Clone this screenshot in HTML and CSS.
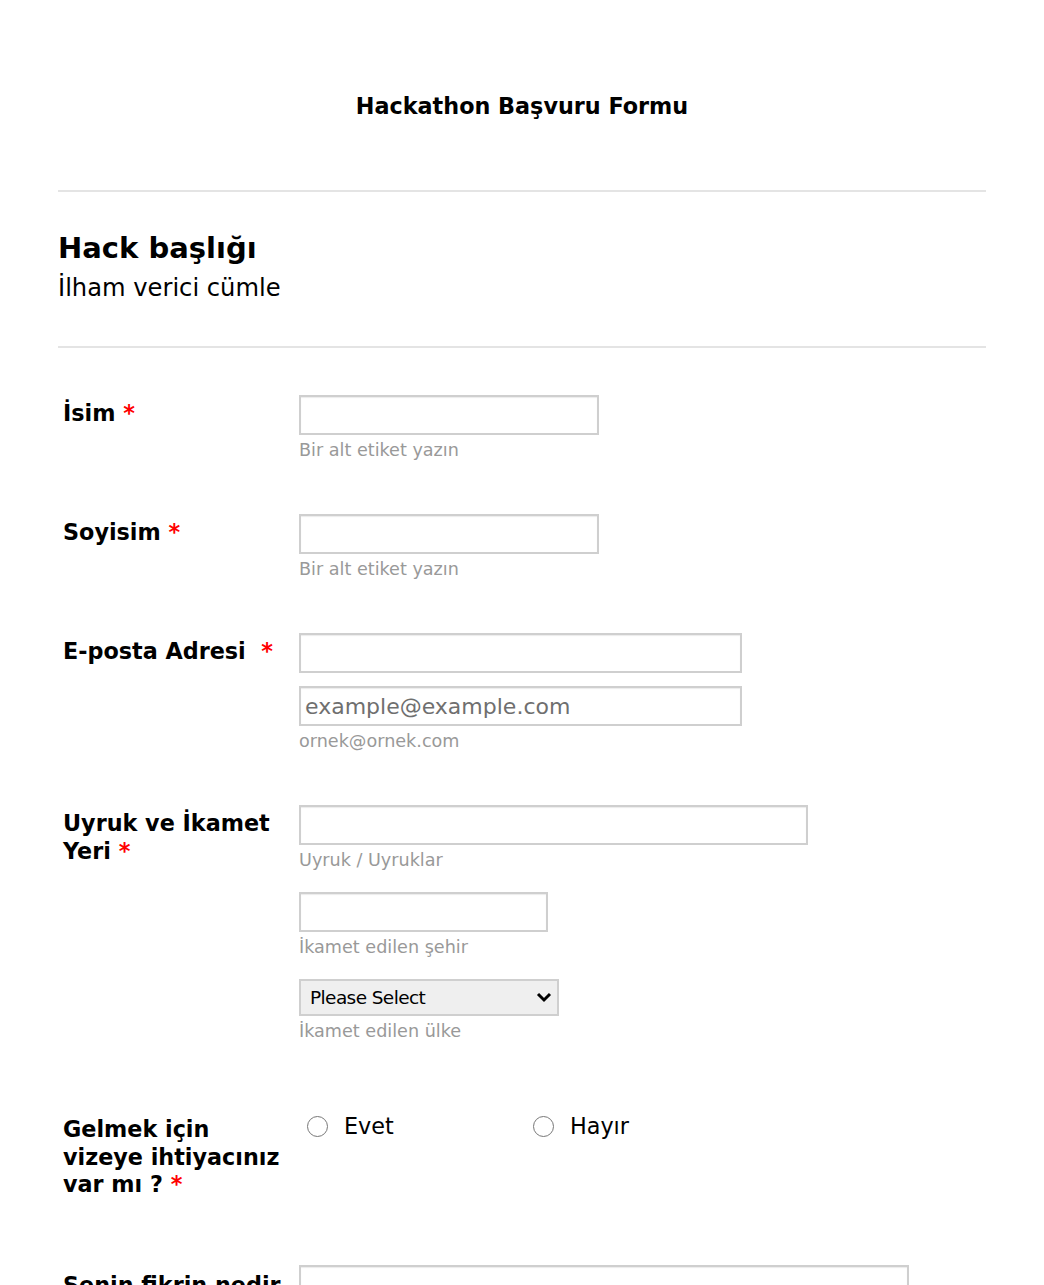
FILE: index.html
```html
<!DOCTYPE html>
<html lang="tr">
<head>
<meta charset="UTF-8" />
<title>Hackathon Başvuru Formu</title>
<link rel="stylesheet" href="styles.css">
</head>
<body>
<div class="page">
	<h1 class="form-title">Hackathon Başvuru Formu</h1>
	<div class="sep"></div>
	<div class="heading">
		<h2>Hack başlığı</h2>
		<div class="subheading">İlham verici cümle</div>
	</div>
	<div class="sep"></div>

	<div class="row first">
		<label class="lbl">İsim <span class="req">*</span></label>
		<div class="fields">
			<div class="sub last">
				<input type="text" class="w300" />
				<div class="hint">Bir alt etiket yazın</div>
			</div>
		</div>
	</div>

	<div class="row">
		<label class="lbl">Soyisim <span class="req">*</span></label>
		<div class="fields">
			<div class="sub last">
				<input type="text" class="w300" />
				<div class="hint">Bir alt etiket yazın</div>
			</div>
		</div>
	</div>

	<div class="row">
		<label class="lbl">E-posta Adresi &nbsp;<span class="req">*</span></label>
		<div class="fields">
			<input type="text" class="w443" />
			<div class="sub last tight">
				<input type="email" class="w443" placeholder="example@example.com" />
				<div class="hint">ornek@ornek.com</div>
			</div>
		</div>
	</div>

	<div class="row">
		<label class="lbl">Uyruk ve İkamet Yeri <span class="req">*</span></label>
		<div class="fields">
			<div class="sub">
				<input type="text" class="w509" />
				<div class="hint">Uyruk / Uyruklar</div>
			</div>
			<div class="sub">
				<input type="text" class="w249" />
				<div class="hint">İkamet edilen şehir</div>
			</div>
			<div class="sub last">
				<div class="select-wrap">
					<select>
						<option>Please Select</option>
					</select>
					<svg class="chev" width="16" height="11" viewBox="0 0 16 11"><path d="M2 2 L8 8 L14 2" fill="none" stroke="#000" stroke-width="3"/></svg>
				</div>
				<div class="hint">İkamet edilen ülke</div>
			</div>
		</div>
	</div>

	<div class="row radio-row">
		<label class="lbl">Gelmek için vizeye ihtiyacınız var mı ? <span class="req">*</span></label>
		<div class="options">
			<label class="opt"><input type="radio" name="vize" /><span>Evet</span></label>
			<label class="opt"><input type="radio" name="vize" /><span>Hayır</span></label>
		</div>
	</div>

	<div class="row idea-row">
		<label class="lbl">Senin fikrin nedir <span class="req">*</span></label>
		<div class="fields">
			<textarea class="w610"></textarea>
		</div>
	</div>
</div>
</body>
</html>
```

FILE: styles.css
```css
body{
	margin: 0;
	font-family: "DejaVu Sans", Verdana, sans-serif;
	color: #000;
	background: #fff;
}
.page{
	width: 928px;
	margin-left: 58px;
}
.form-title{
	margin: 0 0 0 -58px;
	width: 1044px;
	padding-top: 93px;
	font-size: 22.3px;
	line-height: 26px;
	text-align: center;
}
.sep{
	height: 2px;
	background: #e4e4e4;
}
.form-title + .sep{
	margin-top: 71px;
}
.heading{
	padding: 38px 0 43px;
}
.heading h2{
	margin: 0;
	font-size: 29px;
	line-height: 36px;
}
.subheading{
	margin-top: 7px;
	font-size: 24.2px;
	line-height: 30px;
}
.row{
	display: grid;
	grid-template-columns: 220px 1fr;
	column-gap: 16px;
	padding-left: 5px;
	margin-top: 53px;
}
.row.first{
	margin-top: 47px;
}
.lbl{
	font-weight: bold;
	font-size: 22.3px;
	line-height: 27.5px;
	padding-top: 5px;
}
.req{
	color: #f00;
}
.fields{
	display: flex;
	flex-direction: column;
	align-items: flex-start;
}
.sub{
	margin-bottom: 21px;
}
.sub.last{
	margin-bottom: 0;
}
.sub.tight{
	margin-top: 13px;
}
input[type="text"], input[type="email"], textarea{
	box-sizing: border-box;
	height: 40px;
	margin: 0;
	border: 2px solid #cfcfcf;
	box-shadow: inset 0 1px 1px #ececec;
	padding: 0 4px;
	font-family: "DejaVu Sans", Verdana, sans-serif;
	font-size: 22px;
	background: #fff;
	display: block;
}
input::placeholder{
	color: #6f6f6f;
}
.w300{ width: 300px; }
.w443{ width: 443px; }
.w509{ width: 509px; }
.w249{ width: 249px; }
.w610{ width: 610px; height: 60px; resize: none; }
.hint{
	margin-top: 4px;
	font-size: 17.6px;
	line-height: 22px;
	color: #999;
}
.select-wrap{
	position: relative;
	width: 260px;
}
select{
	appearance: none;
	-webkit-appearance: none;
	box-sizing: border-box;
	width: 260px;
	height: 37px;
	margin: 0;
	border: 2px solid #cfcfcf;
	border-radius: 0;
	background: #efefef;
	padding: 0 0 0 9px;
	font-family: "DejaVu Sans", Verdana, sans-serif;
	font-size: 18.5px;
	letter-spacing: -0.6px;
	color: #000;
	display: block;
}
.chev{
	position: absolute;
	right: 7px;
	top: 13px;
}
.radio-row{
	margin-top: 69px;
}
.options{
	display: flex;
	align-items: flex-start;
	padding-left: 8px;
	padding-top: 2px;
}
.opt{
	display: flex;
	align-items: center;
	width: 226px;
	font-size: 22.3px;
	line-height: 27.5px;
}
.opt input{
	appearance: none;
	-webkit-appearance: none;
	box-sizing: border-box;
	width: 21px;
	height: 21px;
	margin: 0 16px 0 0;
	border: 1.5px solid #777;
	border-radius: 50%;
	background: #fff;
}
.idea-row{
	margin-top: 66px;
}
.idea-row .lbl{
	padding-top: 7px;
}
```
